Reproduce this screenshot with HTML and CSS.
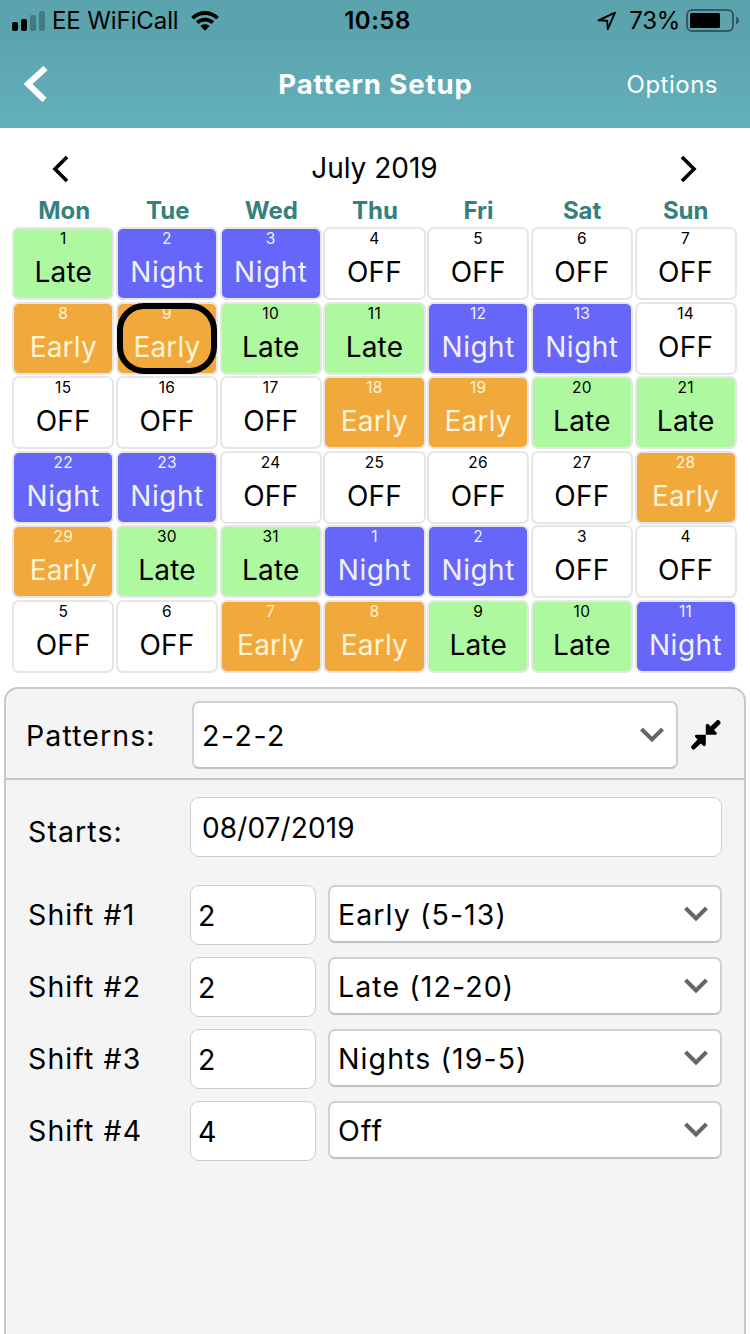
FILE: index.html
```html
<!DOCTYPE html>
<html lang="en">
<head>
  <title>Pattern Setup</title>
  <meta charset="UTF-8" />
  <meta name="viewport" content="width=device-width, initial-scale=1.0"/>
  <link rel="stylesheet" href="styles.css">
</head>
<body>
  <header>
    <div class="status-bar">
      <div class="status-left">
        <svg class="signal" width="34" height="20" viewBox="0 0 34 20">
          <rect x="0" y="11" width="6" height="9" rx="2"/>
          <rect x="9" y="8" width="6" height="12" rx="2"/>
          <rect x="18" y="4" width="6" height="16" rx="2" opacity=".25"/>
          <rect x="27" y="0" width="6" height="20" rx="2" opacity=".25"/>
        </svg>
        <span class="carrier">EE WiFiCall</span>
        <svg class="wifi" width="28" height="20" viewBox="0 0 28 20">
          <path d="M.2 5.7C8-1.9 20-1.9 27.800 5.700L25.200 8.400C19 2.500 9 2.500 2.800 8.400Z"/>
          <path d="M4.800 10.300C10 5.400 18 5.400 23.200 10.300L20.500 13C16.800 9.700 11.200 9.700 7.500 13Z"/>
          <path d="M9.400 15C12 12.700 16 12.700 18.600 15L14 19.800Z"/>
        </svg>
      </div>
      <span class="time">10:58</span>
      <div class="status-right">
        <svg class="location" width="20" height="20" viewBox="0 0 20 20">
          <path d="M1.500 9.300L18 1.700L10.800 18.200L10.200 9.800Z" fill="none" stroke="#000" stroke-width="1.900" stroke-linejoin="round"/>
        </svg>
        <span class="percent">73%</span>
        <svg class="battery" width="54" height="24" viewBox="0 0 54 24">
          <rect x="1" y="1" width="46" height="21" rx="5" fill="none" stroke="#000" stroke-opacity=".45" stroke-width="2"/>
          <rect x="4" y="4" width="30" height="15" rx="1.500"/>
          <path d="M50 7.500C54 9 54 14 50 15.500Z" opacity=".45"/>
        </svg>
      </div>
    </div>
    <nav class="nav-bar">
      <svg class="back" width="24" height="36" viewBox="0 0 24 36">
        <path d="M21.500 2L4 18L20.500 34" fill="none" stroke="#fff" stroke-width="6"/>
      </svg>
      <h1>Pattern Setup</h1>
      <a class="options">Options</a>
    </nav>
  </header>

  <main>
    <section class="calendar">
      <div class="month-bar">
        <svg width="18" height="28" viewBox="0 0 18 28"><path d="M15 2L3 14L15 26"/></svg>
        <h2>July 2019</h2>
        <svg width="18" height="28" viewBox="0 0 18 28"><path d="M3 2L15 14L3 26"/></svg>
      </div>
      <div class="weekdays">
        <span>Mon</span><span>Tue</span><span>Wed</span><span>Thu</span><span>Fri</span><span>Sat</span><span>Sun</span>
      </div>
      <div class="days"></div>
    </section>

    <section class="panel">
      <div class="pattern-row">
        <label>Patterns:</label>
        <div class="select pattern-select">
          <span>2-2-2</span>
          <svg class="arrow" width="24" height="16" viewBox="0 0 24 16"><path d="M1.500 2L12 12.500L22.500 2"/></svg>
        </div>
        <svg class="collapse" width="32" height="32" viewBox="0 0 32 32">
          <path d="M15.800 15.800V6.500Q16.300 3.500 18.500 5.300L20.500 7.500L27 1.200Q28 .4 29 1.300L30.300 2.800Q31 3.800 30.300 4.700L24 11L26.500 13.500Q27.500 15.500 25.500 15.800Z"/>
          <path d="M15.800 15.800V25.500Q15.300 28 13.200 26.800L11 24.500L4.500 30.300Q3.500 31.200 2.500 30.300L1.300 29Q.6 28 1.500 27L7.500 20.500L5.200 18Q4.300 16 6.300 15.800Z"/>
        </svg>
      </div>
      <div class="form">
        <div class="form-row start-row">
          <label>Starts:</label>
          <div class="input date">08/07/2019</div>
        </div>
        <div class="shifts"></div>
      </div>
    </section>
  </main>

<script>
  const names = { L: 'Late', N: 'Night', E: 'Early', O: 'OFF' };
  const classes = { L: 'late', N: 'night', E: 'early', O: 'off' };
  const pattern = 'LNNOOOO' + 'EELLNNO' + 'OOOEELL' + 'NNOOOOE' + 'ELLNNOO' + 'OOEELLN';
  const shifts = [
    { days: 2, name: 'Early (5-13)' },
    { days: 2, name: 'Late (12-20)' },
    { days: 2, name: 'Nights (19-5)' },
    { days: 4, name: 'Off' }
  ];

  const days = document.querySelector('.days');
  [...pattern].forEach((code, i) => {
    const day = document.createElement('div');
    day.className = 'day ' + classes[code];
    if (i === 8) day.className += ' selected';
    day.innerHTML = `<span class="num">${i % 31 + 1}</span><span class="shift">${names[code]}</span>`;
    days.appendChild(day);
  });

  const list = document.querySelector('.shifts');
  shifts.forEach((shift, i) => {
    const row = document.createElement('div');
    row.className = 'form-row';
    row.innerHTML = `
      <label>Shift #${i + 1}</label>
      <div class="input count">${shift.days}</div>
      <div class="select shift-select">
        <span>${shift.name}</span>
        <svg class="arrow" width="24" height="16" viewBox="0 0 24 16"><path d="M1.500 2L12 12.500L22.500 2"/></svg>
      </div>
    `;
    list.appendChild(row);
  });
</script>
</body>
</html>
```
FILE: styles.css
```css
* {
  box-sizing: border-box;
}
body {
  margin: 0;
  height: 1334px;
  overflow: hidden;
  display: flex;
  flex-direction: column;
  font-family: Inter, "Liberation Sans", sans-serif;
  font-size: 28px;
  background-color: #fff;
  color: #000;
}
h1, h2 {
  margin: 0;
}
svg {
  display: block;
  flex: none;
}

header {
  height: 128px;
  flex: none;
  background: linear-gradient(#5ba4ae 30%, #64b1bc);
}
.status-bar {
  height: 41px;
  padding: 0 10px 0 12px;
  display: grid;
  grid-template-columns: 1fr auto 1fr;
  align-items: center;
  font-size: 24px;
}
.status-left, .status-right {
  display: flex;
  align-items: center;
}
.status-right {
  justify-content: flex-end;
}
.carrier {
  margin: 0 12px 0 6px;
  letter-spacing: -0.1px;
}
.time {
  padding-left: 3px;
  font-weight: 600;
  letter-spacing: 0.5px;
}
.location {
  margin-right: 1px;
}
.percent {
  margin: 0 6px 0 11px;
  letter-spacing: -0.3px;
}
.nav-bar {
  height: 87px;
  padding: 0 32px 0 24px;
  display: grid;
  grid-template-columns: 1fr auto 1fr;
  align-items: center;
  color: #fff;
}
.back {
  margin-bottom: 2px;
}
.nav-bar h1 {
  padding: 0 0 1px 9px;
  font-size: 27.5px;
  font-weight: 700;
  letter-spacing: 0.9px;
}
.options {
  justify-self: end;
  font-size: 24px;
  letter-spacing: 0.5px;
}

main {
  flex: 1;
  display: flex;
  flex-direction: column;
}
.calendar {
  padding: 0 13.3px 0 12.2px;
}
.month-bar {
  height: 70px;
  padding: 10px 40px 0;
  display: flex;
  align-items: center;
  justify-content: space-between;
}
.month-bar svg {
  margin-top: 2px;
}
.month-bar h2 {
  font-size: 28px;
  font-weight: 400;
}
.month-bar path {
  fill: none;
  stroke: #000;
  stroke-width: 3.6;
}
.weekdays, .days {
  display: grid;
  grid-template-columns: repeat(7, 1fr);
  column-gap: 1.6px;
}
.weekdays {
  height: 29px;
  padding-left: 1px;
  line-height: 26px;
  text-align: center;
  font-size: 24px;
  font-weight: 700;
  color: #34807f;
}
.days {
  grid-auto-rows: 73px;
  row-gap: 1.5px;
}
.day {
  position: relative;
  display: flex;
  flex-direction: column;
  align-items: center;
  border: 2px solid #e6e6e6;
  border-radius: 7px;
}
.num {
  height: 20px;
  line-height: 20px;
  font-size: 15.5px;
  letter-spacing: 0.3px;
}
.shift {
  line-height: 47px;
  letter-spacing: 0.2px;
}
.late {
  background-color: #aef8a0;
}
.night {
  background-color: #6666f8;
  color: #f0f0ff;
}
.night .shift {
  letter-spacing: 0.5px;
}
.early {
  background-color: #f1a93b;
  color: #fff3d8;
}
.selected::after {
  content: "";
  position: absolute;
  inset: -1px;
  border: 6px solid #000;
  border-radius: 27px;
}

.panel {
  flex: 1;
  margin: 14.5px 4px 0;
  border: 2px solid #c8c8c8;
  border-bottom: 0;
  border-radius: 14px 14px 0 0;
  background-color: #f4f4f4;
  font-size: 28.5px;
  letter-spacing: 1.1px;
}
.pattern-row {
  height: 91px;
  padding: 3px 0 0 20px;
  display: flex;
  align-items: center;
  border-bottom: 2px solid #c8c8c8;
}
.pattern-row label {
  width: 166px;
}
.input, .select {
  display: flex;
  align-items: center;
  background-color: #fff;
}
.input {
  height: 60px;
  border: 1px solid #ccc;
  border-radius: 9px;
}
.select {
  justify-content: space-between;
  border: 2px solid #d0d0d0;
  border-bottom-color: #c0c0c0;
  border-radius: 7px;
}
.arrow path {
  fill: none;
  stroke: #666;
  stroke-width: 4;
}
.pattern-select {
  width: 486px;
  height: 68px;
  padding: 0 12px 0 8px;
}
.pattern-select span {
  padding-top: 1px;
  letter-spacing: 1.5px;
}
.collapse {
  margin-left: 12px;
}
.form {
  padding: 17px 22px 0;
}
.form-row {
  display: flex;
  height: 72px;
}
.form-row label {
  width: 162px;
  line-height: 60px;
}
.start-row {
  height: 88px;
}
.start-row label {
  padding-top: 5px;
}
.date {
  width: 532px;
  padding: 2px 0 0 11px;
  font-size: 28px;
  letter-spacing: 0.1px;
}
.count {
  width: 126px;
  padding-left: 7px;
}
.shift-select {
  width: 394px;
  height: 58px;
  margin-left: 12px;
  padding: 0 12px 0 8px;
}
```
